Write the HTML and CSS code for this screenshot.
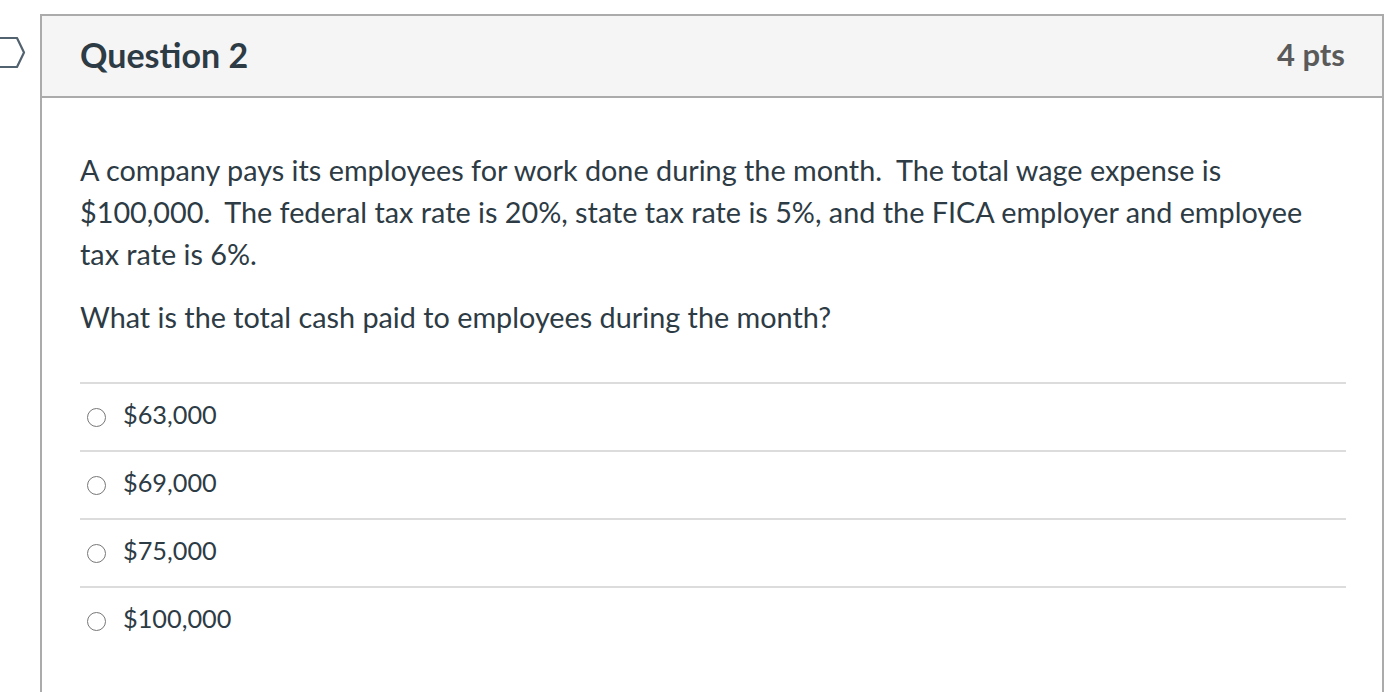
FILE: index.html
```html
<!DOCTYPE html>
<html lang="en">
<head>
<meta charset="utf-8">
<title>Question 2</title>
<link rel="stylesheet" href="styles.css">
</head>
<body>
<div class="page">
  <div class="gutter">
    <svg class="flag" width="27" height="32" viewBox="0 0 27 32" aria-hidden="true">
      <path d="M-4 1 H17 L24 15.5 L17 30 H-4" fill="none" stroke="#52626e" stroke-width="2.2" stroke-linejoin="round"/>
    </svg>
  </div>
  <div class="card">
    <div class="card-header">
      <h2 class="q-title">Question 2</h2>
      <span class="q-pts">4 pts</span>
    </div>
    <div class="card-body">
      <p class="q-text">A company pays its employees for work done during the month.&nbsp; The total wage expense is $100,000.&nbsp; The federal tax rate is 20%, state tax rate is 5%, and the FICA employer and employee tax rate is 6%.</p>
      <p class="q-text">What is the total cash paid to employees during the month?</p>
      <div class="answers">
        <label class="answer"><span class="radio"></span><span class="answer-text">$63,000</span></label>
        <label class="answer"><span class="radio"></span><span class="answer-text">$69,000</span></label>
        <label class="answer"><span class="radio"></span><span class="answer-text">$75,000</span></label>
        <label class="answer"><span class="radio"></span><span class="answer-text">$100,000</span></label>
      </div>
    </div>
  </div>
</div>
</body>
</html>
```
FILE: styles.css
```css
html, body {
  margin: 0;
  padding: 0;
  background: #ffffff;
  font-family: Lato, "Noto Sans", sans-serif;
  color: #2d3b45;
}
.page {
  display: flex;
  align-items: flex-start;
  padding-top: 14px;
  height: 678px;
  overflow: hidden;
}
.gutter {
  width: 40px;
  flex: none;
  padding-top: 23px;
}
.flag {
  display: block;
}
.card {
  width: 1344px;
  box-sizing: border-box;
  border: 2px solid #ababab;
  border-bottom: none;
  min-height: 700px;
}
.card-header {
  height: 80px;
  box-sizing: content-box;
  background: #f5f5f5;
  border-bottom: 2px solid #ababab;
  display: flex;
  align-items: center;
  justify-content: space-between;
  padding: 0 37px 0 38px;
}
.q-title {
  margin: 0;
  font-size: 34px;
  font-weight: 700;
  color: #2d3b45;
  position: relative;
  top: -2px;
}
.q-pts {
  font-size: 31px;
  font-weight: 700;
  color: #5a5a5a;
  position: relative;
  top: -2px;
}
.card-body {
  padding: 51px 36px 0 38px;
}
.q-text {
  margin: 0 0 21px;
  font-size: 28.8px;
  line-height: 42px;
}
.answers {
  margin-top: 44px;
}
.answer {
  display: flex;
  align-items: center;
  gap: 17px;
  height: 66px;
  border-top: 2px solid #dcdcdc;
  padding-left: 7px;
  font-size: 25.3px;
}
.radio {
  width: 17px;
  height: 17px;
  border: 1.5px solid #777777;
  border-radius: 50%;
  flex: none;
}
.answer-text {
  position: relative;
  top: -3px;
}
```
